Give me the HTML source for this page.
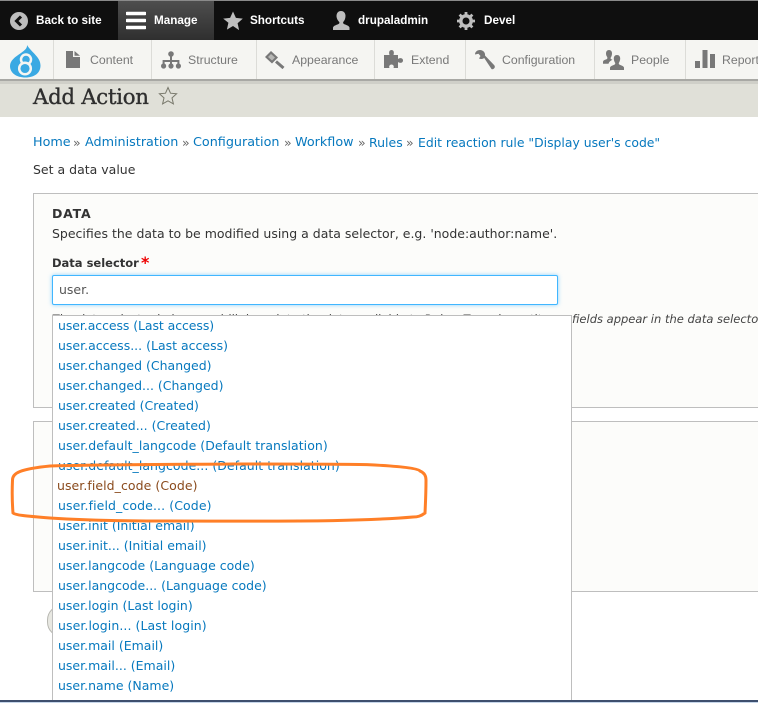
<!DOCTYPE html>
<html><head><meta charset="utf-8"><title>Add Action</title>
<style>
html,body{margin:0;padding:0;background:#fff}
#p{position:relative;width:758px;height:703px;overflow:hidden;background:#fff;font-family:"DejaVu Sans","Liberation Sans",sans-serif;font-size:12.5px;color:#333}
#p div,#p a,#p svg{position:absolute}
.t{white-space:nowrap;line-height:16px}
.tb{font:bold 11.7px/16px "Liberation Sans",sans-serif;color:#fff;top:13px;white-space:nowrap}
.mn{font:12.3px/16px "Liberation Sans",sans-serif;color:#787878;top:52px;white-space:nowrap}
.dv{top:40px;width:1px;height:39px;background:#dcdcd8}
a{color:#0678be;text-decoration:none;white-space:nowrap;line-height:16px}
.b{font-size:12.75px}
</style></head><body><div id="p">
<div style="left:0;top:0;width:758px;height:1px;background:#8a8a8a"></div>
<div style="left:0;top:1px;width:758px;height:39px;background:#0f0f0f"></div>
<div style="left:118px;top:1px;width:96px;height:39px;background:linear-gradient(#4e4e4e,#2f2f2f)"></div>

<svg style="left:10px;top:12px" width="18" height="18" viewBox="0 0 18 18"><circle cx="9" cy="9" r="9" fill="#bdbdbd"/><path d="M11 4.500L6.500 9l4.500 4.500" fill="none" stroke="#111" stroke-width="3"/></svg>
<div class="tb" style="left:36px">Back to site</div>
<svg style="left:126px;top:11px" width="20" height="20" viewBox="0 0 20 20"><path d="M1 2.500h18M1 9.500h18M1 16.500h18" stroke="#fff" stroke-width="3.500" stroke-linecap="round"/></svg>
<div class="tb" style="left:154px">Manage</div>
<svg style="left:223px;top:11px" width="20" height="20" viewBox="0 0 20 20"><path d="M10 .5l2.900 6.400 6.900.700-5.200 4.600 1.500 6.900L10 15l-6.100 3.600 1.500-6.900L.2 7.600l6.900-.700z" fill="#bebebe"/></svg>
<div class="tb" style="left:250px">Shortcuts</div>
<svg style="left:331px;top:11px" width="20" height="20" viewBox="0 0 20 20"><path d="M10 0c3 0 4.500 2.300 4.500 5 0 2.500-1 4.700-2.300 6-.3 1 0 1.800 1.500 2.400 2.300.8 4.300 1.600 4.800 3.100v2.500H2v-2.500c.5-1.500 2.500-2.300 4.800-3.100 1.500-.6 1.800-1.400 1.500-2.400C7 9.700 5.500 7.500 5.500 5 5.500 2.300 7 0 10 0z" fill="#bebebe"/></svg>
<div class="tb" style="left:358px">drupaladmin</div>
<svg style="left:457px;top:12px" width="18" height="18" viewBox="0 0 18 18"><circle cx="9" cy="9" r="5.200" fill="none" stroke="#bebebe" stroke-width="3.400"/><path d="M9 0v4M9 14v4M0 9h4M14 9h4M2.600 2.600l2.800 2.800M12.600 12.600l2.800 2.800M2.600 15.400l2.800-2.800M12.600 5.400l2.800-2.800" stroke="#bebebe" stroke-width="2.800"/></svg>
<div class="tb" style="left:484px">Devel</div>

<div style="left:0;top:40px;width:758px;height:39px;background:#f5f5f2"></div>
<div style="left:0;top:79px;width:758px;height:2px;background:#a8a8a4"></div>
<div style="left:0;top:81px;width:758px;height:36px;background:#e0e0d8"></div>
<div style="left:0;top:81px;width:758px;height:3px;background:#cfcfc8"></div>
<div class="dv" style="left:53px"></div><div class="dv" style="left:151px"></div><div class="dv" style="left:256px"></div><div class="dv" style="left:374px"></div><div class="dv" style="left:465px"></div><div class="dv" style="left:594px"></div><div class="dv" style="left:685px"></div>

<svg style="left:10px;top:45px" width="31" height="33" viewBox="0 0 31 33"><path d="M17 0c.5 3-2.500 5.500-6 8C5 12 0 15.500 0 21c0 7 6.500 11.500 15.500 11.500S30.500 28 30.500 20.500C30.500 12 22 8 17 0z" fill="#3aa9e3"/><circle cx="16" cy="14.500" r="5" fill="#3aa9e3" stroke="#f5f5f2" stroke-width="2.500"/><circle cx="15" cy="23.500" r="5.800" fill="#3aa9e3" stroke="#f5f5f2" stroke-width="2.500"/></svg>
<svg style="left:66px;top:51px" width="14" height="17" viewBox="0 0 14 17"><path d="M0 0h7v6h7v11H0zM8.500 0L14 4.800H8.500z" fill="#787878"/></svg>
<div class="mn" style="left:90px">Content</div>
<svg style="left:161px;top:51px" width="20" height="18" viewBox="0 0 20 18"><circle cx="10" cy="3" r="2.800" fill="#787878"/><circle cx="2.600" cy="15" r="2.600" fill="#787878"/><circle cx="10" cy="15" r="2.600" fill="#787878"/><circle cx="17.400" cy="15" r="2.600" fill="#787878"/><path d="M10 3v12M2.600 15v-5h14.800v5" fill="none" stroke="#787878" stroke-width="2"/></svg>
<div class="mn" style="left:188px">Structure</div>
<svg style="left:265px;top:51px" width="20" height="18" viewBox="0 0 20 18"><path d="M0 6L6 0l7 6.500-6 6z" fill="#787878"/><path d="M11 10.500l7.500 6.500" stroke="#787878" stroke-width="3"/><path d="M3 6l3-3 4 3.500-3 3z" fill="#f5f5f2" opacity=".5"/></svg>
<div class="mn" style="left:292px">Appearance</div>
<svg style="left:384px;top:50px" width="20" height="19" viewBox="0 0 20 19"><path d="M0 5h5.500C4.500 2 5.500 0 7.500 0s3 2 2 5H14v4c2-1.500 5-1 5 1.500S16 13.500 14 12v6H9.500c1-2-.5-3.500-2-3.500s-3 1.500-2 3.500H0z" fill="#787878"/></svg>
<div class="mn" style="left:411px">Extend</div>
<svg style="left:475px;top:50px" width="20" height="20" viewBox="0 0 20 20"><path d="M5 0C2 0 0 2 0 4.500l3.500-.8L5.500 6 4 8.500c2 .8 4 .5 5.200-.5l7.300 11c1 .8 3-.3 3.300-1.700.2-1-.3-1.800-1-2.500L10 5.500C10.500 2.500 8 0 5 0z" fill="#787878"/></svg>
<div class="mn" style="left:502px">Configuration</div>
<svg style="left:603px;top:50px" width="21" height="20" viewBox="0 0 21 20"><path d="M6 0c2 0 3 1.500 3 3.500S8.200 7 7.500 8c0 1 1 1.500 2 1.800-2 1-3.500 2-4 4H0v-2c.3-1.500 2-2 3.500-2.500 1-.4 1-1.300.7-2.300C3.500 6 3 5 3 3.500 3 1.500 4 0 6 0z" fill="#787878"/><path d="M14 5c2.300 0 3.200 1.700 3.200 3.500S16.500 12 15.800 13c-.2 1 .3 1.500 1.500 2 1.700.7 3.200 1.200 3.700 2.500V20H7v-2.500c.5-1.300 2-1.800 3.700-2.500 1.200-.5 1.700-1 1.500-2-.7-1-1.400-2.700-1.400-4.500S11.700 5 14 5z" fill="#787878"/></svg>
<div class="mn" style="left:631px">People</div>
<svg style="left:695px;top:50px" width="20" height="18" viewBox="0 0 20 18"><path d="M0 11h5v7H0zM7.500 0h5v18h-5zM15 4h5v14h-5z" fill="#787878"/></svg>
<div class="mn" style="left:722px">Reports</div>

<div class="t" style="left:33px;top:85px;font-size:21.3px;line-height:26px;color:#2f2f2f;font-family:'DejaVu Serif','Liberation Serif',serif;letter-spacing:-.3px;-webkit-text-stroke:.35px #2f2f2f">Add Action</div>
<svg style="left:158px;top:86px" width="20" height="20" viewBox="0 0 20 20"><path d="M10 1.500l2.500 5.700 6.100.6-4.600 4.100 1.400 6L10 14.800 4.600 17.900l1.400-6L1.400 7.800l6.100-.6z" fill="none" stroke="#77776a" stroke-width="1"/></svg>

<a class="b" style="left:33px;top:135px">Home</a><div class="t" style="left:73px;top:135px;color:#666">»</div>
<a class="b" style="left:85px;top:135px">Administration</a><div class="t" style="left:182px;top:135px;color:#666">»</div>
<a class="b" style="left:193px;top:135px">Configuration</a><div class="t" style="left:284px;top:135px;color:#666">»</div>
<a class="b" style="left:295px;top:135px">Workflow</a><div class="t" style="left:358px;top:135px;color:#666">»</div>
<a style="left:369px;top:135px">Rules</a><div class="t" style="left:406px;top:135px;color:#666">»</div>
<a style="left:418px;top:135px;font-size:12.4px">Edit reaction rule "Display user's code"</a>
<div class="t" style="left:33px;top:162px">Set a data value</div>

<div style="left:33px;top:193px;width:740px;height:213px;background:#fcfcfa;border:1px solid #bebebe"></div>
<div style="left:33px;top:421px;width:740px;height:169px;background:#fcfcfa;border:1px solid #bebebe"></div>
<div class="t" style="left:52px;top:206px;font-weight:bold;font-size:12.5px;letter-spacing:.8px">DATA</div>
<div class="t" style="left:52px;top:226px">Specifies the data to be modified using a data selector, e.g. 'node:author:name'.</div>
<div class="t" style="left:52px;top:255px;font-weight:bold;font-size:11.5px">Data selector</div>
<div class="t" style="left:141px;top:255px;color:#e00;font-size:16px;font-weight:bold">*</div>
<div style="left:52px;top:275px;width:504px;height:28px;background:#fff;border:1px solid #40b6ff;border-radius:2px;box-shadow:0 0 4px rgba(64,182,255,.6)"></div>
<div class="t" style="left:59px;top:282px;color:#555">user.</div>
<div class="t" style="left:52px;top:311px;width:518px;overflow:hidden;font-style:italic;font-size:11.5px;color:#444">The data selector helps you drill down into the data available to Rules. To make entity</div>
<div class="t" style="left:572px;top:311px;font-style:italic;font-size:11.5px;color:#444">fields appear in the data selector</div>
<div style="left:47px;top:605px;width:30px;height:30px;border-radius:15px;background:#e8e8e2;border:1px solid #b8b8b2"></div>

<div style="left:52px;top:315px;width:518px;height:400px;background:#fff;border:1px solid #bebebe"></div>
<a style="left:58px;top:318px;letter-spacing:-.08px">user.access (Last access)</a>
<a style="left:58px;top:338px">user.access... (Last access)</a>
<a style="left:58px;top:358px">user.changed (Changed)</a>
<a style="left:58px;top:378px">user.changed... (Changed)</a>
<a style="left:58px;top:398px">user.created (Created)</a>
<a style="left:58px;top:418px">user.created... (Created)</a>
<a style="left:58px;top:438px;letter-spacing:.04px">user.default_langcode (Default translation)</a>
<a style="left:58px;top:458px;letter-spacing:.04px">user.default_langcode... (Default translation)</a>
<a style="left:57px;top:478px;color:#8a4a1c;letter-spacing:.06px">user.field_code (Code)</a>
<a style="left:58px;top:498px;letter-spacing:.1px">user.field_code... (Code)</a>
<a style="left:58px;top:518px">user.init (Initial email)</a>
<a style="left:58px;top:538px">user.init... (Initial email)</a>
<a style="left:58px;top:558px">user.langcode (Language code)</a>
<a style="left:58px;top:578px">user.langcode... (Language code)</a>
<a style="left:58px;top:598px">user.login (Last login)</a>
<a style="left:58px;top:618px;letter-spacing:.08px">user.login... (Last login)</a>
<a style="left:58px;top:638px">user.mail (Email)</a>
<a style="left:58px;top:658px">user.mail... (Email)</a>
<a style="left:58px;top:678px">user.name (Name)</a>

<svg style="left:0;top:455px" width="440" height="80" viewBox="0 0 440 80"><path d="M12.500 25C12.500 18 20 14 50 11C110 9.500 170 9.500 233 9C290 9 335 9 367 9.600C395 11 418 13 420 16C425 18 426 22 426 25C426 36 425.500 48 425 58C421 61 418 62 413 62C390 64 360 65 333 65.600C280 66.500 220 66 167 66C120 66 80 65 50 63C25 61 15 60 13 58C12 46 12 36 12.500 25Z" fill="none" stroke="#ff7f27" stroke-width="3"/></svg>

<div style="left:0;top:700px;width:758px;height:2px;background:#3e4f6e"></div>
<div style="left:0;top:702px;width:758px;height:1px;background:#c6d6ea"></div>
</div></body></html>
